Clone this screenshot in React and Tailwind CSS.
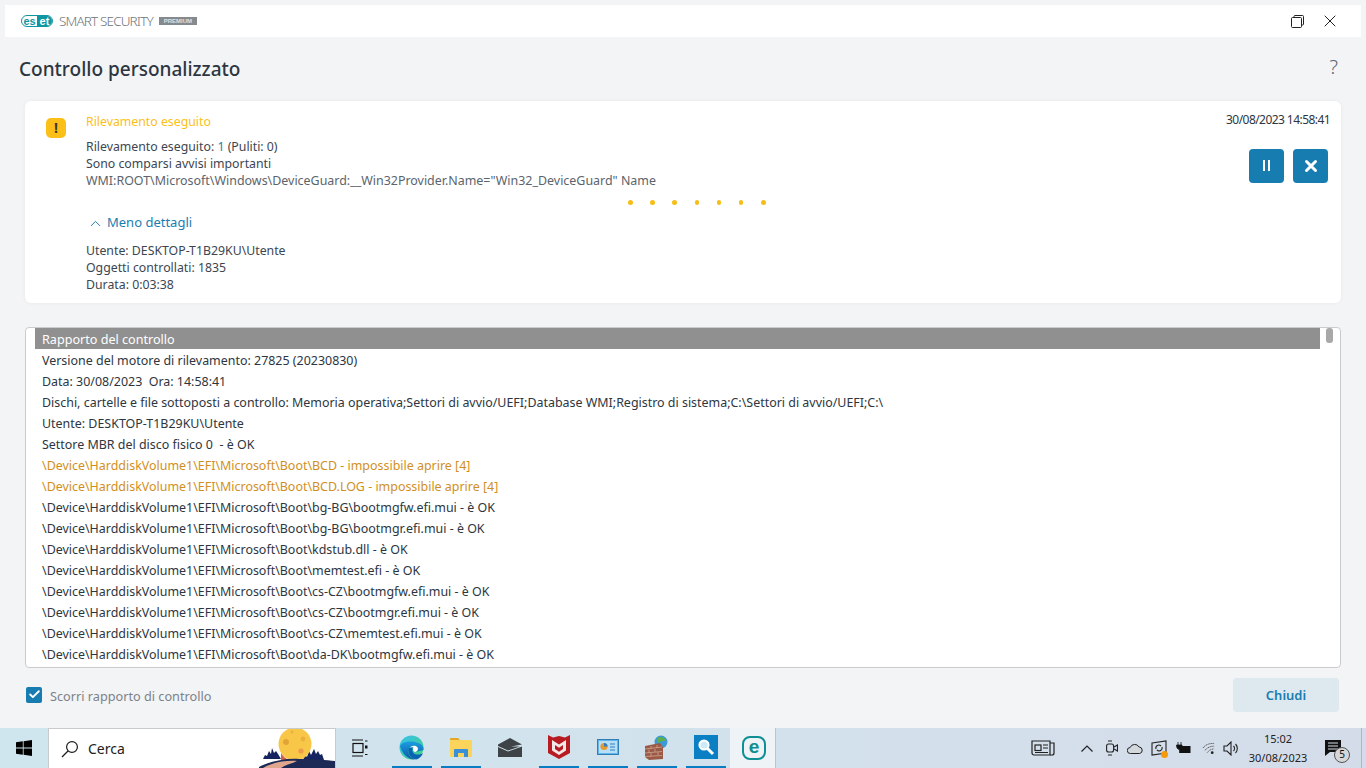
import React from 'react';
import { X, ChevronUp, Check } from 'lucide-react';

const logLines = [
    { text: 'Versione del motore di rilevamento: 27825 (20230830)' },
    { text: 'Data: 30/08/2023\u00a0\u00a0Ora: 14:58:41' },
    { text: 'Dischi, cartelle e file sottoposti a controllo: Memoria operativa;Settori di avvio/UEFI;Database WMI;Registro di sistema;C:\\Settori di avvio/UEFI;C:\\' },
    { text: 'Utente: DESKTOP-T1B29KU\\Utente' },
    { text: 'Settore MBR del disco fisico 0\u00a0\u00a0- è OK' },
    { text: '\\Device\\HarddiskVolume1\\EFI\\Microsoft\\Boot\\BCD - impossibile aprire [4]', warn: true },
    { text: '\\Device\\HarddiskVolume1\\EFI\\Microsoft\\Boot\\BCD.LOG - impossibile aprire [4]', warn: true },
    { text: '\\Device\\HarddiskVolume1\\EFI\\Microsoft\\Boot\\bg-BG\\bootmgfw.efi.mui - è OK' },
    { text: '\\Device\\HarddiskVolume1\\EFI\\Microsoft\\Boot\\bg-BG\\bootmgr.efi.mui - è OK' },
    { text: '\\Device\\HarddiskVolume1\\EFI\\Microsoft\\Boot\\kdstub.dll - è OK' },
    { text: '\\Device\\HarddiskVolume1\\EFI\\Microsoft\\Boot\\memtest.efi - è OK' },
    { text: '\\Device\\HarddiskVolume1\\EFI\\Microsoft\\Boot\\cs-CZ\\bootmgfw.efi.mui - è OK' },
    { text: '\\Device\\HarddiskVolume1\\EFI\\Microsoft\\Boot\\cs-CZ\\bootmgr.efi.mui - è OK' },
    { text: '\\Device\\HarddiskVolume1\\EFI\\Microsoft\\Boot\\cs-CZ\\memtest.efi.mui - è OK' },
    { text: '\\Device\\HarddiskVolume1\\EFI\\Microsoft\\Boot\\da-DK\\bootmgfw.efi.mui - è OK' },
];

const EsetLogo = () => (
    <div className="flex h-[12px] w-[32px] items-center overflow-hidden rounded-[6px] border border-[#0f96a0]">
        <span className="flex h-full flex-1 items-center justify-center font-['Liberation_Sans',sans-serif] text-[11px] font-bold text-[#0f96a0]">es</span>
        <span className="flex h-full flex-1 items-center justify-center bg-[#0f96a0] font-['Liberation_Sans',sans-serif] text-[11px] font-bold text-white">et</span>
    </div>
);

const Moon = () => (
    <svg width="76" height="39" viewBox="0 0 76 39" className="shrink-0">
        <path d="M4 30 l2 -4 l2 1 l2 -5 l2 3 l1 -6 l2 5 l2 -2 l2 3 l3 5 Z" fill="#16245f" />
        <path d="M44 31 l2 -5 l2 2 l2 -6 l2 4 l3 -6 l2 5 l2 -3 l2 4 l2 -1 l2 6 Z" fill="#16245f" />
        <circle cx="36" cy="15" r="16.5" fill="#f8c748" />
        <circle cx="27" cy="13" r="3" fill="#e2a437" />
        <circle cx="42" cy="22" r="2.6" fill="#ec9a4c" />
        <circle cx="44" cy="10" r="2.4" fill="#e9b03f" />
        <circle cx="33" cy="3" r="1.5" fill="#e9b03f" />
        <path d="M22 24 a16.5 16.5 0 0 0 8 7 l-8 1 Z" fill="#d85c46" />
        <path d="M-2 39 C8 33 26 29 40 30 C54 30 68 31 76 32 V39 Z" fill="#1c2a55" />
        <path d="M4 39 C12 34 26 31 38 32 C32 35 26 36 22 39 Z" fill="#e0a68e" />
    </svg>
);

const StartIcon = () => (
    <svg width="16" height="16" viewBox="0 0 16 16" fill="#000">
        <path d="M0 2.3 L6.8 1.3 V7.6 H0 Z M7.6 1.2 L16 0 V7.6 H7.6 Z M0 8.4 H6.8 V14.7 L0 13.7 Z M7.6 8.4 H16 V16 L7.6 14.8 Z" />
    </svg>
);

const SearchGlass = () => (
    <svg width="18" height="18" viewBox="0 0 18 18" fill="none" stroke="#1b1b1b" strokeWidth="1.2">
        <circle cx="11" cy="7" r="5.4" />
        <path d="M7 11 L1 17" />
    </svg>
);

const TaskView = () => (
    <svg width="17" height="18" viewBox="0 0 17 18" fill="none" stroke="#111" strokeWidth="1.2">
        <path d="M1 1 H12 M1 17 H12" />
        <rect x="2" y="4.5" width="10" height="9" />
        <rect x="14" y="6.5" width="2.5" height="3" fill="#111" stroke="none" />
        <path d="M14 2 H16.5 M14 15.5 H16.5" />
    </svg>
);

const EdgeIcon = () => (
    <svg width="25" height="25" viewBox="0 0 25 25">
        <defs>
            <linearGradient id="edgeA" x1="0" y1="0" x2="1" y2="1">
                <stop offset="0" stopColor="#35c1f1" />
                <stop offset="1" stopColor="#45d07c" />
            </linearGradient>
            <linearGradient id="edgeB" x1="0" y1="0" x2="0" y2="1">
                <stop offset="0" stopColor="#1b9de2" />
                <stop offset="1" stopColor="#0c59a4" />
            </linearGradient>
        </defs>
        <circle cx="12.5" cy="12.5" r="12" fill="url(#edgeA)" />
        <path d="M1 11 C3 19 10 25 16 24.5 C11 23 8.5 19 9.5 14.5 C10.5 11 15 9.5 18 12 C21 15 17 17 16.5 17 L24.5 15 C25 12 23 9 19 8 C11 5 3 7 1 11 Z" fill="url(#edgeB)" />
        <path d="M9.5 14 C8.5 19 12 24 17 24.4 C20 24 23 21 24 18 C21 20 17 20 15 18.5 C13 17 13 14 14 12 C12 12 10 12.5 9.5 14 Z" fill="#0b63b4" />
        <path d="M11 13 C13 10 17 10 18.5 12.5 C19.5 14.5 18 16.5 16 17 C14 16.5 13.5 14 14.5 12.5 C13 12 12 12.3 11 13 Z" fill="#fff" />
    </svg>
);

const FolderIcon = () => (
    <svg width="22" height="20" viewBox="0 0 22 20">
        <path d="M0 2 a1 1 0 0 1 1 -1 H8 L10 3 H0 Z" fill="#e5a823" />
        <rect x="0" y="3" width="22" height="17" rx="1" fill="#fbd45c" />
        <path d="M4 20 V13 a1 1 0 0 1 1 -1 H17 a1 1 0 0 1 1 1 V20 H14 V16 H8 V20 Z" fill="#3b8fd6" />
    </svg>
);

const MailIcon = () => (
    <svg width="24" height="19" viewBox="0 0 24 19">
        <path d="M0 6.5 L12 0 L24 6.5 L13 8.5 L22 8.6 L10 12.5 L0 8 Z" fill="#3d4347" />
        <path d="M0 9 L10 13.5 L24 8.6 V19 H0 Z" fill="#3d4347" />
    </svg>
);

const McAfeeIcon = () => (
    <svg width="22" height="24" viewBox="0 0 22 24">
        <path d="M0 0 L5 2.5 L11 1 L17 2.5 L22 0 V18 L11 24 L0 18 Z" fill="#b81c22" />
        <path d="M4 5 L11 9.5 L18 5 V15.5 L11 20 L4 15.5 Z" fill="#f3e9e9" />
        <path d="M7 10 L11 12.8 L15 10 V14 L11 16.8 L7 14 Z" fill="#b81c22" />
    </svg>
);

const PanelIcon = () => (
    <svg width="22" height="16" viewBox="0 0 22 16">
        <rect x="0.5" y="0.5" width="21" height="15" fill="#63b4e8" stroke="#2f7fb8" />
        <rect x="2" y="2" width="18" height="12" fill="#b7e0f7" />
        <circle cx="7" cy="7.5" r="3.6" fill="#e59b2d" />
        <path d="M7 7.5 V3.9 A3.6 3.6 0 0 1 10.6 7.5 Z" fill="#2e7fc1" />
        <path d="M13 5 H18 M13 8 H18 M13 11 H18" stroke="#2e7fc1" strokeWidth="1.2" />
    </svg>
);

const FirewallIcon = () => (
    <svg width="24" height="25" viewBox="0 0 24 25">
        <circle cx="16" cy="7" r="6.5" fill="#3c9ad6" />
        <path d="M12 3 C15 1 19 2 21 5 C19 7 17 5 15 7 C14 9 11 7 12 3 Z" fill="#5db04a" />
        <path d="M0 11 L15 8 L18 12 V24 L4 25 L0 22 Z" fill="#9a5a46" />
        <path d="M0 14 L17 12 M0 18 L17 16.5 M0 21.5 L17 20.5 M6 11 V14 M12 10 V13 M4 14.5 V18 M10 14 V17 M6 18 V21.5 M13 17 V20" stroke="#d7b09c" strokeWidth="0.7" />
    </svg>
);

const MagnifierTile = () => (
    <div className="flex h-[24px] w-[24px] items-center justify-center bg-[#0a7fc4]">
        <svg width="18" height="18" viewBox="0 0 18 18" fill="none" stroke="#fff">
            <circle cx="7" cy="7" r="4.6" strokeWidth="2" fill="#cdeaf8" />
            <path d="M10.5 10.5 L16 16" strokeWidth="3" />
        </svg>
    </div>
);

const EsetTile = () => (
    <div className="flex h-[24px] w-[24px] items-center justify-center rounded-[8px] border-2 border-[#0f8f93] font-['Liberation_Sans',sans-serif] text-[19px] leading-none font-bold text-[#0f8f93]">
        <span className="-mt-[3px]">e</span>
    </div>
);

const TaskApp = ({ children, open = true }) => (
    <div className="flex h-full w-[49px] flex-col items-center">
        <div className="flex flex-1 items-center justify-center">{children}</div>
        <div className={`mx-auto h-[2px] w-[40px] ${open ? 'bg-[#0a7cc4]' : ''}`} />
    </div>
);

const TrayIcons = () => (
    <div className="flex items-center">
        <svg width="24" height="16" viewBox="0 0 24 16" fill="none" stroke="#222" strokeWidth="1.2" className="mr-[26px]">
            <path d="M1 1 H19 V15 H3 a2 2 0 0 1 -2 -2 Z" />
            <path d="M19 3 H23 V13 a2 2 0 0 1 -2 2 H19" />
            <rect x="4" y="5" width="6" height="5.5" />
            <path d="M12 5 H17 M12 8 H17 M4 12.5 H17" />
        </svg>
        <svg width="12" height="7" viewBox="0 0 12 7" fill="none" stroke="#222" strokeWidth="1.2" className="mr-[13px]">
            <path d="M0.5 6.5 L6 1 L11.5 6.5" />
        </svg>
        <svg width="12" height="16" viewBox="0 0 12 16" fill="none" stroke="#222" strokeWidth="1.1" className="mr-[9px]">
            <rect x="0.6" y="4" width="7" height="8" rx="2" />
            <path d="M8 7 L11.5 5 V11 L8 9 M2 1 H6 M2 15 H6" />
        </svg>
        <svg width="16" height="11" viewBox="0 0 16 11" className="mr-[8px]">
            <path d="M3.5 10.5 a3 3 0 0 1 -0.4 -6 a5 5 0 0 1 9 -0.5 a3.3 3.3 0 0 1 0.6 6.5 Z" fill="#d3d8dd" stroke="#222" strokeWidth="1" />
        </svg>
        <div className="relative mr-[8px] h-[16px] w-[16px]">
            <svg width="16" height="16" viewBox="0 0 16 16" fill="none" stroke="#222" strokeWidth="1.1">
                <path d="M1 3 L15 1 V13 L1 15 Z" />
                <path d="M5 9 a3 3 0 0 1 5 -3 M11 7 a3 3 0 0 1 -5 3" />
            </svg>
            <div className="absolute -right-[1px] -bottom-[2px] h-[7px] w-[7px] rounded-full bg-[#f59a0a]" />
        </div>
        <svg width="16" height="12" viewBox="0 0 16 12" className="mr-[11px]">
            <path d="M3 0 V3 M6 0 V3 M1.5 3 H7 V6 L4.5 8 L2 6 Z M4.5 8 V11" stroke="#111" fill="#111" strokeWidth="0.8" />
            <rect x="5" y="4" width="10.5" height="7" fill="#111" />
        </svg>
        <svg width="13" height="13" viewBox="0 0 14 13" fill="none" stroke="#555" strokeWidth="1" className="mr-[8px]">
            <path d="M1 6 C4 2 8 1 13 1 M3 8.5 C6 5.5 9 4 13 4 M5.5 11 C7.5 8.5 10 7 13 7" strokeDasharray="1.5 0.6" />
            <circle cx="11" cy="11" r="1.5" fill="#222" stroke="none" />
        </svg>
        <svg width="16" height="15" viewBox="0 0 16 15" fill="none" stroke="#222" strokeWidth="1.1">
            <path d="M1 5 H4 L8 1 V14 L4 10 H1 Z M10.5 5 a3.5 3.5 0 0 1 0 5 M12.5 3 a6.5 6.5 0 0 1 0 9" />
        </svg>
    </div>
);

const App = () => {
    return (
        <div className="flex h-[768px] w-[1366px] flex-col overflow-hidden bg-[#f3f4f6] font-['Noto_Sans',sans-serif] text-[12.3px] text-[#3c4650]">
            <div className="mx-[5px] mt-[5px] flex h-[32px] shrink-0 items-center bg-white pl-[16px]">
                <EsetLogo />
                <span className="ml-[6px] text-[13.5px] font-light tracking-[-0.85px] text-[#6f757a]">SMART SECURITY</span>
                <span className="ml-[6px] flex h-[8px] w-[38px] items-center justify-center bg-[#858a8f] font-['Liberation_Sans',sans-serif] text-[6px] font-bold text-[#dfe1e3]">PREMIUM</span>
                <div className="ml-auto flex items-center">
                    <svg width="13" height="13" viewBox="0 0 13 13" fill="none" stroke="#222" strokeWidth="1" className="mr-[16px]">
                        <rect x="0.5" y="2.5" width="10" height="10" rx="1" />
                        <path d="M3 2.5 V1.5 a1 1 0 0 1 1 -1 H11.5 a1 1 0 0 1 1 1 V9 a1 1 0 0 1 -1 1 H10.5" />
                    </svg>
                    <X size={20} strokeWidth={1.2} color="#222" className="mr-[21px]" />
                </div>
            </div>

            <div className="flex h-[64px] shrink-0 items-start justify-between pt-[18px] pr-[28px] pl-[19px]">
                <h1 className="text-[19px] font-medium text-[#2d3640]">Controllo personalizzato</h1>
                <span className="-mt-[3px] text-[20px] font-light text-[#5b6670]">?</span>
            </div>

            <div className="mx-[25px] flex h-[202px] shrink-0 rounded-[6px] bg-white pt-[12px] pl-[21px] shadow-[0_0_4px_rgba(0,0,0,0.05)]">
                <div className="mt-[5px] flex h-[20px] w-[20px] shrink-0 items-center justify-center rounded-[5px] bg-[#fcbf17] text-[14px] leading-none font-bold text-[#3a3a32]">!</div>
                <div className="ml-[20px] flex-1">
                    <div className="flex h-[18px] items-center justify-between pr-[11px]">
                        <span className="text-[#fcbf17]">Rilevamento eseguito</span>
                        <span className="mb-[4px] text-[12px] tracking-[-0.56px] text-[#2d3640]">30/08/2023 14:58:41</span>
                    </div>
                    <div className="mt-[7px] flex items-center justify-between pr-[13px]">
                        <div className="leading-[17px]">
                            <div>Rilevamento eseguito: <span className="text-[#1a7db0]">1</span> (Puliti: 0)</div>
                            <div>Sono comparsi avvisi importanti</div>
                            <div className="text-[12.45px] text-[#5b646c]">WMI:ROOT\Microsoft\Windows\DeviceGuard:__Win32Provider.Name="Win32_DeviceGuard" Name</div>
                        </div>
                        <div className="mt-[4px] flex gap-[9px]">
                            <button className="flex h-[34px] w-[35px] items-center justify-center gap-[2.5px] rounded-[4px] bg-[#177db0]">
                                <div className="h-[11px] w-[2.5px] bg-white" />
                                <div className="h-[11px] w-[2.5px] bg-white" />
                            </button>
                            <button className="flex h-[34px] w-[35px] items-center justify-center rounded-[4px] bg-[#177db0]">
                                <X size={18} color="#fff" strokeWidth={4} />
                            </button>
                        </div>
                    </div>
                    <div className="mt-[11px] ml-[542px] flex h-[4px] gap-[17.7px]">
                        {[0, 1, 2, 3, 4, 5, 6].map(dot => (
                            <div key={dot} className="h-[4.5px] w-[4.5px] rounded-full bg-[#f6bd16]" />
                        ))}
                    </div>
                    <div className="mt-[9px] flex h-[20px] items-center text-[13px] text-[#1a7db0]">
                        <ChevronUp size={17} strokeWidth={1.4} className="mr-[3px] ml-[1px]" />
                        Meno dettagli
                    </div>
                    <div className="mt-[9px] leading-[17px]">
                        <div>Utente: DESKTOP-T1B29KU\Utente</div>
                        <div>Oggetti controllati: 1835</div>
                        <div>Durata: 0:03:38</div>
                    </div>
                </div>
            </div>

            <div className="relative mx-[25px] mt-[24px] h-[341px] shrink-0 overflow-hidden rounded-[4px] border border-[#c9cbcd] bg-white text-[12.45px]">
                <div className="ml-[9px] flex h-[21px] w-[1285px] items-center bg-[#909090] pt-[3px] pl-[7px] text-[12.6px] text-white">Rapporto del controllo</div>
                {logLines.map(line => (
                    <div key={line.text} className={`flex h-[21px] items-center pt-[3px] pl-[16px] whitespace-nowrap ${line.warn ? 'text-[#d18f1e]' : 'text-[#2d3640]'}`}>
                        {line.text}
                    </div>
                ))}
                <div className="absolute top-0 right-[7px] h-[15px] w-[7px] rounded-[3px] bg-[#a8a8a8]" />
            </div>

            <div className="mb-[6px] flex h-[54px] shrink-0 items-center justify-between pr-[27px] pl-[26px]">
                <div className="flex items-center">
                    <div className="flex h-[16px] w-[16px] items-center justify-center rounded-[2px] bg-[#177db0]">
                        <Check size={13} color="#fff" strokeWidth={3.4} />
                    </div>
                    <span className="mt-[3px] ml-[8px] text-[12.7px] text-[#7c8288]">Scorri rapporto di controllo</span>
                </div>
                <button className="h-[34px] w-[106px] rounded-[4px] bg-[#dde8ef] pt-[1px] text-[13px] font-semibold text-[#1a7db0]">Chiudi</button>
            </div>

            <div className="flex h-[40px] shrink-0 items-center bg-gradient-to-r from-[#cfe6ef] via-[#d2e2ec] to-[#d4dce9]">
                <div className="flex h-full w-[48px] items-center justify-center"><StartIcon /></div>
                <div className="flex h-full w-[288px] items-center overflow-hidden border-x border-t border-[#c8cbce] bg-white pl-[12px]">
                    <SearchGlass />
                    <span className="ml-[9px] text-[14px] text-[#222]">Cerca</span>
                    <div className="ml-auto"><Moon /></div>
                </div>
                <div className="flex h-full w-[51px] items-center justify-center pr-[5px]"><TaskView /></div>
                <div className="flex h-full items-center">
                    <TaskApp><EdgeIcon /></TaskApp>
                    <TaskApp><FolderIcon /></TaskApp>
                    <TaskApp open={false}><MailIcon /></TaskApp>
                    <TaskApp><McAfeeIcon /></TaskApp>
                    <TaskApp><PanelIcon /></TaskApp>
                    <TaskApp><FirewallIcon /></TaskApp>
                    <TaskApp><MagnifierTile /></TaskApp>
                    <div className="flex h-full w-[45px] items-center justify-center bg-white/60 pl-[3px]"><EsetTile /></div>
                </div>
                <div className="h-full w-[1px] bg-[#b9c6d0]" />
                <div className="ml-auto flex h-full items-center">
                    <TrayIcons />
                    <div className="ml-[5px] w-[68px] text-center text-[11px] leading-[19px] text-[#222]">
                        <div>15:02</div>
                        <div>30/08/2023</div>
                    </div>
                    <div className="relative mr-[19px] ml-[13px] h-[17px] w-[17px]">
                        <svg width="17" height="16" viewBox="0 0 17 16" fill="#111">
                            <path d="M0 0 H16 V12 H5 L0 16 Z" />
                            <path d="M3 3 H13 M3 6 H13 M3 9 H13" stroke="#d4dce9" strokeWidth="1" />
                        </svg>
                        <div className="absolute -right-[8px] -bottom-[6px] flex h-[16px] w-[16px] items-center justify-center rounded-full border border-[#555] bg-[#d4d6d8] text-[10px] text-[#111]">5</div>
                    </div>
                    <div className="h-full w-[1px] bg-[#aeb6c2]" />
                    <div className="w-[4px]" />
                </div>
            </div>
        </div>
    );
};

export default App;
